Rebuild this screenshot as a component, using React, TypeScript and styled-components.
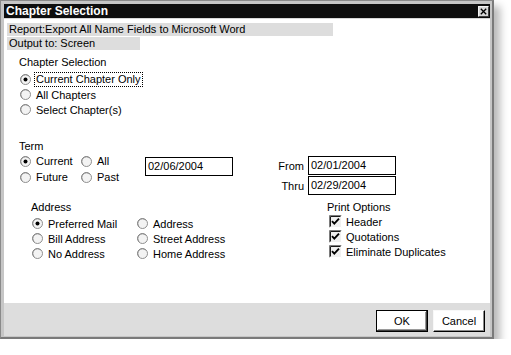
import React from 'react';
import styled, { createGlobalStyle } from 'styled-components';

const Global = createGlobalStyle`
  html, body { margin: 0; padding: 0; background: #fff; }
  body {
    font-family: "Liberation Sans", Arial, sans-serif;
    font-size: 11px;
    color: #000;
  }
  * { box-sizing: border-box; }
`;

const checker = `
  background-color: #dddddd;
`;

const Window = styled.div`
  width: 494px;
  height: 339px;
  border: 1px solid #8a8a8a;
  border-right: 2px solid #7a7a7a;
  border-bottom: 2px solid #7a7a7a;
  background: #c6c6c6;
  padding: 3px 2px 1px 3px;
  display: flex;
  flex-direction: column;
  box-shadow: 6px 6px 8px rgba(0, 0, 0, 0.28);
`;

const TitleBar = styled.div`
  height: 14px;
  flex: none;
  background: #0e0e0e;
  color: #fff;
  display: flex;
  align-items: center;
  justify-content: space-between;
  padding: 0 0 0 2px;
`;

const TitleText = styled.span`
  font-weight: bold;
  font-size: 12px;
  line-height: 14px;
`;

const CloseButton = styled.span`
  width: 11px;
  height: 11px;
  margin-right: 1px;
  background: #d6d6d6;
  border-top: 1px solid #f4f4f4;
  border-left: 1px solid #f4f4f4;
  border-right: 1px solid #404040;
  border-bottom: 1px solid #404040;
  display: flex;
  align-items: center;
  justify-content: center;
`;

const Body = styled.div`
  flex: 1;
  background: #fff;
  border-top: 1px solid #d8d8d8;
  display: flex;
  flex-direction: column;
`;

const InfoRow = styled.div<{ $width: number; $top: number }>`
  ${checker}
  width: ${(p) => p.$width}px;
  height: 13px;
  line-height: 13px;
  margin: ${(p) => p.$top}px 0 0 3px;
  padding-left: 2px;
  white-space: nowrap;
`;

const ChapterGroup = styled.div`
  margin: 5px 0 0 15px;
`;

const GroupLabel = styled.div<{ $h?: number }>`
  height: ${(p) => p.$h ?? 14}px;
  line-height: ${(p) => p.$h ?? 14}px;
`;

const RadioList = styled.div`
  margin: 3px 0 0 1px;
  display: flex;
  flex-direction: column;
`;

const OptionRow = styled.label<{ $h?: number }>`
  height: ${(p) => p.$h ?? 15}px;
  display: flex;
  align-items: center;
  gap: 5px;
  white-space: nowrap;
`;

const Focus = styled.span`
  outline: 1px dotted #000;
  outline-offset: 0;
  padding: 0 1px;
  margin-left: -1px;
  line-height: 13px;
`;

const TermRow = styled.div`
  margin-top: 23px;
  display: flex;
  align-items: flex-start;
`;

const TermGroup = styled.div`
  margin-left: 15px;
  width: 126px;
`;

const TermGrid = styled.div`
  margin-left: 1px;
  display: grid;
  grid-template-columns: 61px auto;
  grid-auto-rows: 16px;
`;

const TextField = styled.div<{ $top?: number }>`
  width: 88px;
  height: 19px;
  margin-top: ${(p) => p.$top ?? 0}px;
  border: 1px solid #000;
  background: #fff;
  padding-left: 2px;
  line-height: 17px;
`;

const RangeGrid = styled.div`
  margin: 16px 0 0 42px;
  display: grid;
  grid-template-columns: 29px 88px;
  column-gap: 4px;
  row-gap: 1px;
  align-items: center;
`;

const RangeLabel = styled.span`
  text-align: right;
`;

const AddressRow = styled.div`
  margin-top: 5px;
  display: flex;
  align-items: flex-start;
`;

const AddressGroup = styled.div`
  margin-left: 27px;
  width: 296px;
`;

const AddressGrid = styled.div`
  margin: 2px 0 0 1px;
  display: grid;
  grid-template-columns: 105px auto;
  grid-template-rows: repeat(3, 15px);
  grid-auto-flow: column;
`;

const PrintGroup = styled.div``;

const CheckList = styled.div`
  margin-left: 2px;
  display: flex;
  flex-direction: column;
`;

const CheckRow = styled.label`
  height: 15px;
  display: flex;
  align-items: center;
  gap: 4px;
  white-space: nowrap;
`;

const ButtonBar = styled.div`
  ${checker}
  height: 33px;
  flex: none;
  display: flex;
  justify-content: flex-end;
  align-items: flex-start;
  gap: 5px;
  padding: 7px 5px 0 0;
`;

const DialogButton = styled.button<{ $default?: boolean }>`
  width: 52px;
  height: 22px;
  padding: 0;
  font-family: "Liberation Sans", Arial, sans-serif;
  font-size: 11px;
  color: #000;
  background: #fff;
  border: 1px solid ${(p) => (p.$default ? '#000' : 'transparent')};
  border-top-color: ${(p) => (p.$default ? '#000' : '#f8f8f8')};
  border-left-color: ${(p) => (p.$default ? '#000' : '#f8f8f8')};
  border-right-color: #000;
  border-bottom-color: #000;
  box-shadow: ${(p) =>
    p.$default
      ? 'inset -1px -1px #404040, inset 1px 1px #fff, inset -2px -2px #9a9a9a'
      : 'inset -1px -1px #8a8a8a, inset 1px 1px #fff'};
`;

const Radio: React.FC<{ checked?: boolean }> = ({ checked }) => (
  <svg width="11" height="11" viewBox="0 0 11 11" style={{ flex: 'none' }}>
    <circle cx="5.5" cy="5.5" r="5" fill="#f3f3f3" stroke="#8e8e8e" strokeWidth="1" />
    <path d="M2.2 8.5 A4.3 4.3 0 0 1 8.5 2.2" fill="none" stroke="#5a5a5a" strokeWidth="0.8" opacity="0.6" />
    {checked && <circle cx="5.5" cy="5.5" r="2" fill="#000" />}
  </svg>
);

const Check: React.FC = () => (
  <svg width="13" height="13" viewBox="0 0 13 13" style={{ flex: 'none' }}>
    <rect x="0" y="0" width="13" height="13" fill="#f0f0f0" />
    <path d="M0.5 12.5 V0.5 H12.5" fill="none" stroke="#7c7c7c" />
    <path d="M1.5 11.5 V1.5 H11.5" fill="none" stroke="#1a1a1a" />
    <path d="M12.5 0.5 V12.5 H0.5" fill="none" stroke="#ffffff" />
    <path d="M3 6.2 L5.3 8.6 L10 3.6" fill="none" stroke="#000" strokeWidth="1.9" />
  </svg>
);

const CloseX: React.FC = () => (
  <svg width="7" height="7" viewBox="0 0 7 7">
    <path d="M0.8 0.8 L6.2 6.2 M6.2 0.8 L0.8 6.2" stroke="#000" strokeWidth="1.3" />
  </svg>
);

export default function App() {
  return (
    <>
      <Global />
      <Window>
        <TitleBar>
          <TitleText>Chapter Selection</TitleText>
          <CloseButton>
            <CloseX />
          </CloseButton>
        </TitleBar>
        <Body>
          <InfoRow $width={326} $top={4}>Report:Export All Name Fields to Microsoft Word</InfoRow>
          <InfoRow $width={133} $top={1}>Output to: Screen</InfoRow>

          <ChapterGroup>
            <GroupLabel>Chapter Selection</GroupLabel>
            <RadioList>
              <OptionRow>
                <Radio checked />
                <Focus>Current Chapter Only</Focus>
              </OptionRow>
              <OptionRow>
                <Radio />
                All Chapters
              </OptionRow>
              <OptionRow>
                <Radio />
                Select Chapter(s)
              </OptionRow>
            </RadioList>
          </ChapterGroup>

          <TermRow>
            <TermGroup>
              <GroupLabel $h={13}>Term</GroupLabel>
              <TermGrid>
                <OptionRow $h={16}>
                  <Radio checked />
                  Current
                </OptionRow>
                <OptionRow $h={16}>
                  <Radio />
                  All
                </OptionRow>
                <OptionRow $h={16}>
                  <Radio />
                  Future
                </OptionRow>
                <OptionRow $h={16}>
                  <Radio />
                  Past
                </OptionRow>
              </TermGrid>
            </TermGroup>
            <TextField $top={17}>02/06/2004</TextField>
            <RangeGrid>
              <RangeLabel>From</RangeLabel>
              <TextField>02/01/2004</TextField>
              <RangeLabel>Thru</RangeLabel>
              <TextField>02/29/2004</TextField>
            </RangeGrid>
          </TermRow>

          <AddressRow>
            <AddressGroup>
              <GroupLabel>Address</GroupLabel>
              <AddressGrid>
                <OptionRow>
                  <Radio checked />
                  Preferred Mail
                </OptionRow>
                <OptionRow>
                  <Radio />
                  Bill Address
                </OptionRow>
                <OptionRow>
                  <Radio />
                  No Address
                </OptionRow>
                <OptionRow>
                  <Radio />
                  Address
                </OptionRow>
                <OptionRow>
                  <Radio />
                  Street Address
                </OptionRow>
                <OptionRow>
                  <Radio />
                  Home Address
                </OptionRow>
              </AddressGrid>
            </AddressGroup>
            <PrintGroup>
              <GroupLabel>Print Options</GroupLabel>
              <CheckList>
                <CheckRow>
                  <Check />
                  Header
                </CheckRow>
                <CheckRow>
                  <Check />
                  Quotations
                </CheckRow>
                <CheckRow>
                  <Check />
                  Eliminate Duplicates
                </CheckRow>
              </CheckList>
            </PrintGroup>
          </AddressRow>
        </Body>
        <ButtonBar>
          <DialogButton $default>OK</DialogButton>
          <DialogButton>Cancel</DialogButton>
        </ButtonBar>
      </Window>
    </>
  );
}
